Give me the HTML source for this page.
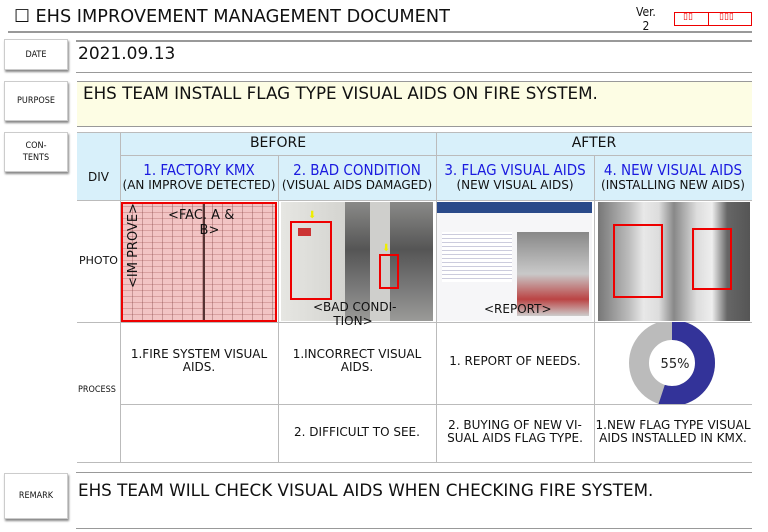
<!DOCTYPE html>
<html><head><meta charset="utf-8"><style>
body{margin:0;width:768px;height:532px;background:#fff;position:relative;overflow:hidden;font-family:"DejaVu Sans","Liberation Sans",sans-serif;color:#111}
.a{position:absolute}
.btn{position:absolute;left:4px;width:62px;background:#fff;border:1px solid #ccc;box-shadow:1px 2px 2px #888;font-size:9px;text-align:center;display:flex;align-items:center;justify-content:center;line-height:12px;font-family:"DejaVu Sans Condensed","DejaVu Sans",sans-serif}
.hl{position:absolute;left:76px;width:676px;height:1px;background:#999}
.c{position:absolute;text-align:center;display:flex;align-items:center;justify-content:center;flex-direction:column;font-size:12px;line-height:13px;white-space:nowrap}
.vl{position:absolute;width:1px;background:#bbb}
.hh{position:absolute;height:1px;background:#bbb}
.blue{color:#1a1adf;font-size:15px;line-height:17px;font-family:"DejaVu Sans Condensed","DejaVu Sans",sans-serif}
</style></head><body>
<div class="a" style="left:14px;top:7px;font-size:17.7px">☐ EHS IMPROVEMENT MANAGEMENT DOCUMENT</div>
<div class="a" style="left:8px;top:31px;width:744px;height:2px;background:#999"></div>
<div class="a" style="left:636px;top:5px;font-size:12px;text-align:center;line-height:14px;font-family:'DejaVu Sans Condensed','DejaVu Sans',sans-serif">Ver.<br>2</div>
<div class="a" style="left:674px;top:12px;width:76px;height:12px;border:1px solid #e00"></div>
<div class="a" style="left:708px;top:12px;width:1px;height:14px;background:#e00"></div>
<div class="a" style="left:683px;top:12px;font-size:9px;color:#e00">▯▯</div>
<div class="a" style="left:719px;top:12px;font-size:9px;color:#e00">▯▯▯</div>

<div class="btn" style="top:39px;height:29px">DATE</div>
<div class="hl" style="top:40px;height:2px"></div>
<div class="a" style="left:78px;top:44px;font-size:17px">2021.09.13</div>
<div class="hl" style="top:72px"></div>

<div class="btn" style="top:81px;height:38px">PURPOSE</div>
<div class="a" style="left:77px;top:81px;width:675px;height:44px;background:#fdfde4;border-top:1px solid #999;border-bottom:1px solid #999"></div>
<div class="a" style="left:83px;top:83px;font-size:16.75px">EHS TEAM INSTALL FLAG TYPE VISUAL AIDS ON FIRE SYSTEM.</div>

<div class="btn" style="top:132px;height:38px">CON-<br>TENTS</div>
<div class="a" style="left:77px;top:132px;width:675px;height:68px;background:#d8f0fa"></div>
<div class="hh" style="left:77px;width:675px;top:132px"></div>
<div class="hh" style="left:120px;width:632px;top:155px"></div>
<div class="hh" style="left:77px;width:675px;top:200px"></div>
<div class="hh" style="left:77px;width:675px;top:322px"></div>
<div class="hh" style="left:120px;width:632px;top:404px"></div>
<div class="hh" style="left:77px;width:675px;top:462px"></div>
<div class="vl" style="left:120px;top:132px;height:330px"></div>
<div class="vl" style="left:436px;top:132px;height:330px"></div>
<div class="vl" style="left:278px;top:155px;height:307px"></div>
<div class="vl" style="left:594px;top:155px;height:307px"></div>
<div class="c" style="left:77px;top:155px;width:43px;height:45px">DIV</div>
<div class="c" style="left:120px;top:132px;width:316px;height:23px;font-size:14px">BEFORE</div>
<div class="c" style="left:436px;top:132px;width:316px;height:23px;font-size:14px">AFTER</div>
<div class="c" style="left:120px;top:157px;width:158px;height:40px"><span class="blue">1. FACTORY KMX</span>(AN IMPROVE DETECTED)</div>
<div class="c" style="left:278px;top:157px;width:158px;height:40px"><span class="blue">2. BAD CONDITION</span>(VISUAL AIDS DAMAGED)</div>
<div class="c" style="left:436px;top:157px;width:158px;height:40px"><span class="blue">3. FLAG VISUAL AIDS</span>(NEW VISUAL AIDS)</div>
<div class="c" style="left:594px;top:157px;width:158px;height:40px"><span class="blue">4. NEW VISUAL AIDS</span>(INSTALLING NEW AIDS)</div>

<div class="a" style="left:79px;top:254px;font-size:11px">PHOTO</div>
<div class="a" style="left:121px;top:202px;width:152px;height:116px;background:repeating-linear-gradient(0deg,#f2c4c4 0 5px,#d8a0a0 5px 6px),#f4caca;border:2px solid #e00"></div>
<div class="a" style="left:123px;top:204px;width:152px;height:116px;background:repeating-linear-gradient(90deg,transparent 0 9px,rgba(120,60,60,.35) 9px 10px)"></div>
<div class="a" style="left:203px;top:204px;width:2px;height:116px;background:#533"></div>
<div class="a" style="left:168px;top:208px;font-size:13px;text-align:center;line-height:15px">&lt;FAC. A &amp;<br>&nbsp;&nbsp;&nbsp;&nbsp;B&gt;</div>
<div class="a" style="left:126px;top:288px;font-size:13px;transform:rotate(-90deg);transform-origin:0 0">&lt;IM&nbsp;PROVE&gt;</div>
<div class="a" style="left:281px;top:202px;width:64px;height:119px;background:linear-gradient(90deg,#e6e6e2,#d4d4d0)"></div>
<div class="a" style="left:345px;top:202px;width:88px;height:119px;background:linear-gradient(180deg,#8a8a88,#555 40%,#777 70%,#9a9a98)"></div>
<div class="a" style="left:370px;top:202px;width:20px;height:119px;background:#cfcfcc"></div>
<div class="a" style="left:290px;top:221px;width:38px;height:75px;border:2px solid #e00"></div>
<div class="a" style="left:298px;top:228px;width:13px;height:8px;background:#c33"></div>
<div class="a" style="left:379px;top:254px;width:16px;height:31px;border:2px solid #e00"></div>
<div class="a" style="left:308px;top:210px;color:#ee0;font-size:10px">⬇</div>
<div class="a" style="left:382px;top:243px;color:#ee0;font-size:10px">⬇</div>
<div class="a" style="left:313px;top:300px;font-size:12px;text-align:center;line-height:14px;width:80px;white-space:nowrap">&lt;BAD CONDI-<br>TION&gt;</div>
<div class="a" style="left:437px;top:202px;width:155px;height:119px;background:#f6f6f8"></div>
<div class="a" style="left:437px;top:202px;width:155px;height:11px;background:#2a4a8a"></div>
<div class="a" style="left:517px;top:232px;width:72px;height:84px;background:linear-gradient(180deg,#888,#c9c9c9 50%,#b44 80%,#ccc)"></div>
<div class="a" style="left:442px;top:232px;width:70px;height:50px;background:repeating-linear-gradient(0deg,#fff 0 3px,#ccd 3px 4px)"></div>
<div class="a" style="left:484px;top:302px;font-size:12px">&lt;REPORT&gt;</div>
<div class="a" style="left:598px;top:202px;width:152px;height:119px;background:linear-gradient(90deg,#777,#bbb 20%,#e8e8e8 30%,#ddd 40%,#888 50%,#ddd 65%,#eee 75%,#666 85%,#555)"></div>
<div class="a" style="left:613px;top:224px;width:46px;height:70px;border:2px solid #e00"></div>
<div class="a" style="left:692px;top:228px;width:36px;height:58px;border:2px solid #e00"></div>

<div class="a" style="left:78px;top:385px;font-size:9px;font-family:'DejaVu Sans Condensed','DejaVu Sans',sans-serif">PROCESS</div>
<div class="c" style="left:120px;top:340px;width:158px;height:42px">1.FIRE SYSTEM VISUAL<br>AIDS.</div>
<div class="c" style="left:278px;top:340px;width:158px;height:42px">1.INCORRECT VISUAL<br>AIDS.</div>
<div class="c" style="left:436px;top:340px;width:158px;height:42px">1. REPORT OF NEEDS.</div>
<svg class="a" style="left:594px;top:322px" width="158" height="82" viewBox="0 0 158 82">
<circle cx="78" cy="41" r="33" fill="none" stroke="#bbb" stroke-width="20"/>
<circle cx="78" cy="41" r="33" fill="none" stroke="#333399" stroke-width="20" stroke-dasharray="114 300" transform="rotate(-90 78 41)"/>
<text x="81" y="46" font-size="13" text-anchor="middle" font-family="DejaVu Sans,sans-serif" fill="#222">55%</text>
</svg>
<div class="c" style="left:278px;top:412px;width:158px;height:40px">2. DIFFICULT TO SEE.</div>
<div class="c" style="left:436px;top:412px;width:158px;height:40px">2. BUYING OF NEW VI-<br>SUAL AIDS FLAG TYPE.</div>
<div class="c" style="left:594px;top:412px;width:158px;height:40px">1.NEW FLAG TYPE VISUAL<br>AIDS INSTALLED IN KMX.</div>

<div class="btn" style="top:473px;height:44px">REMARK</div>
<div class="hl" style="top:472px"></div>
<div class="a" style="left:78px;top:480px;font-size:16.75px">EHS TEAM WILL CHECK VISUAL AIDS WHEN CHECKING FIRE SYSTEM.</div>
<div class="hl" style="top:528px"></div>
</body></html>
